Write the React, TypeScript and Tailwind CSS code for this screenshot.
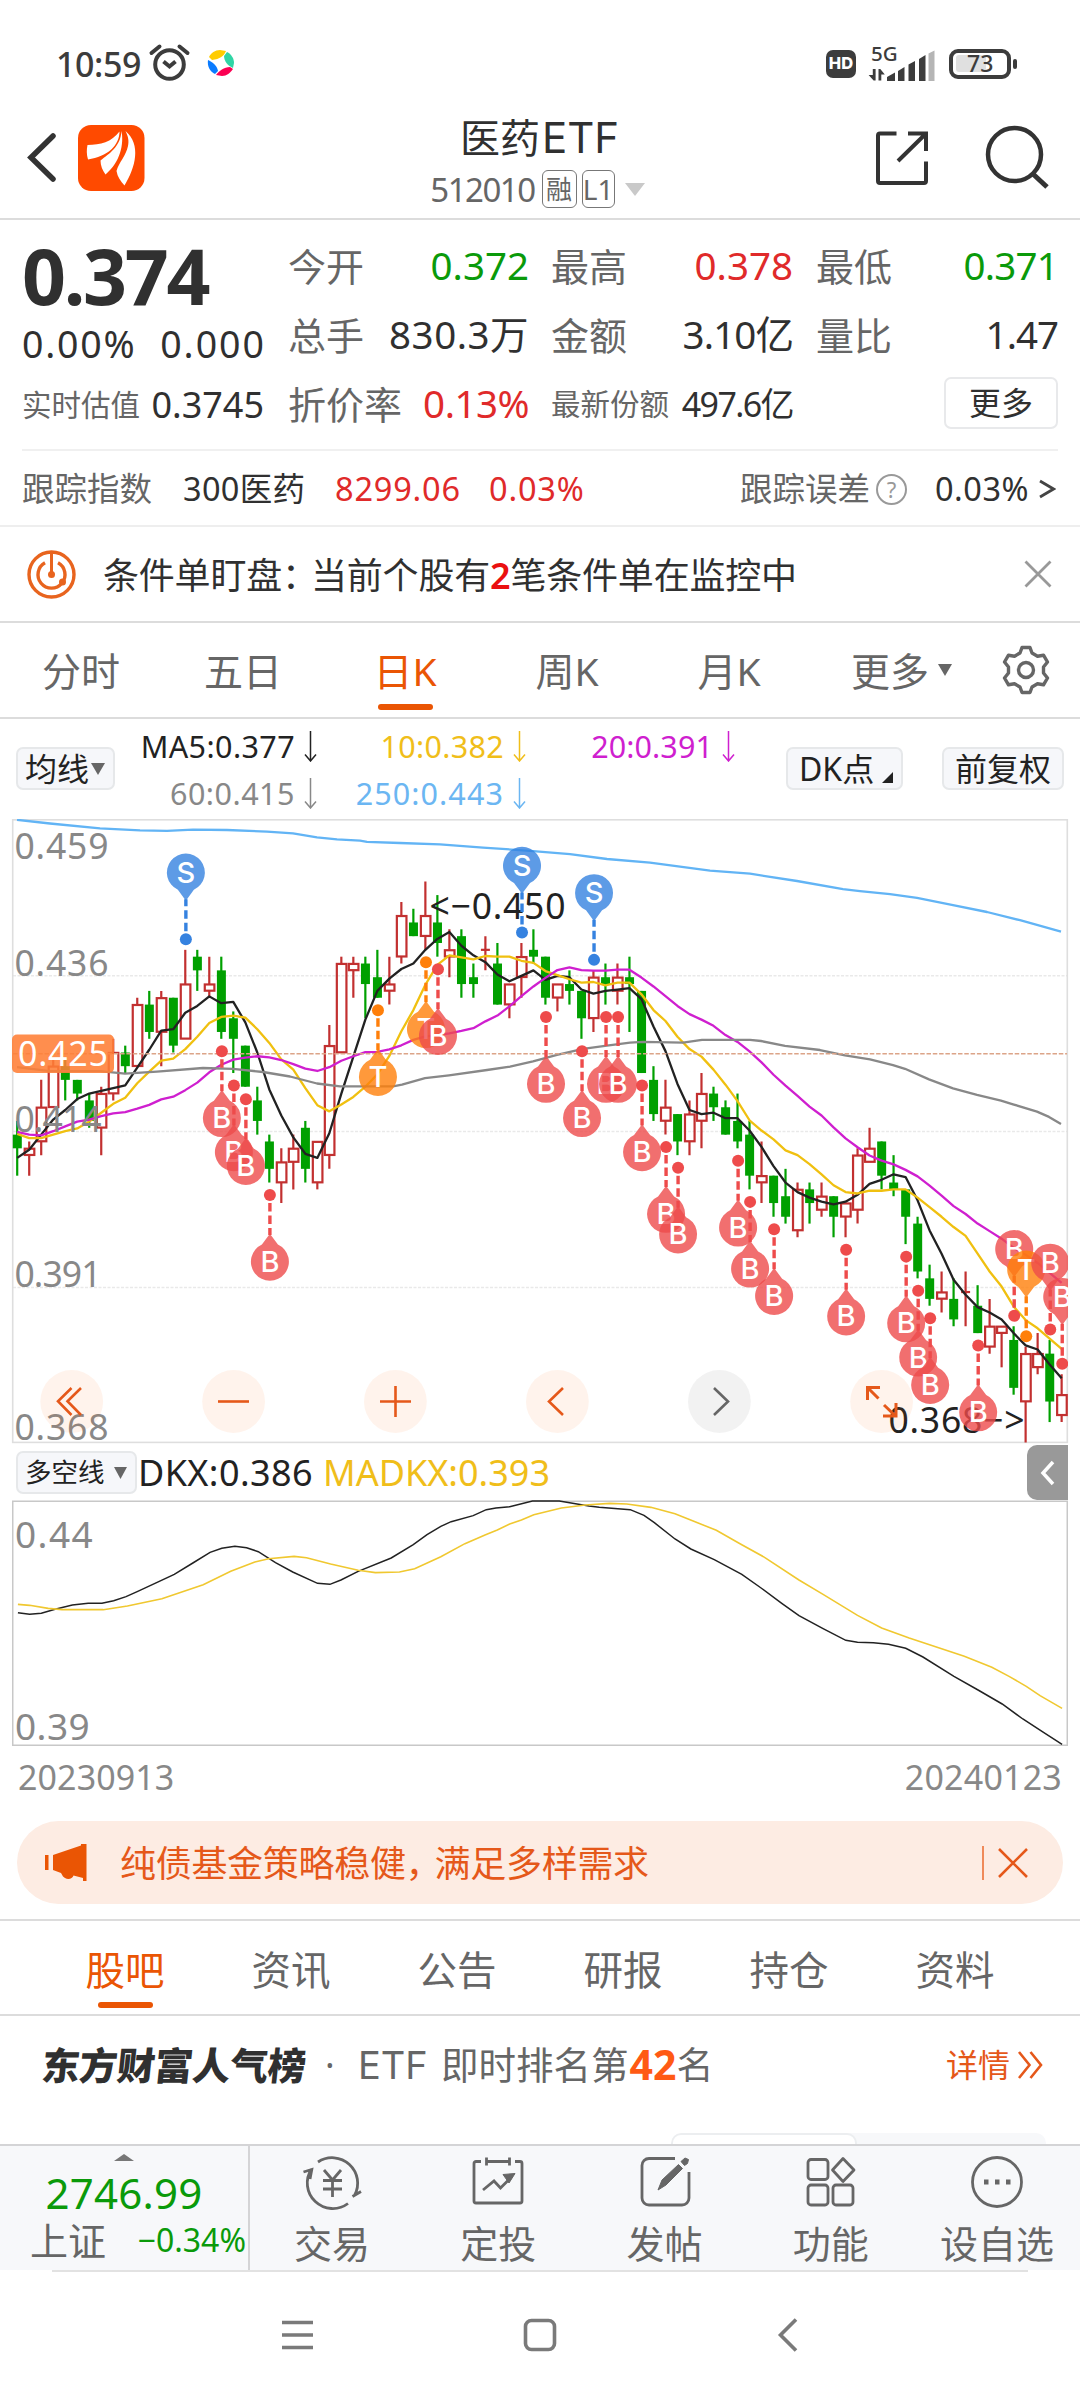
import React from 'react';

// [open, high, low, close] in thousandths
const candles = [
  [413, 415, 407, 411], [410, 412, 407, 411], [412, 421, 410, 417], [417, 424, 417, 423],
  [423, 424, 418, 421], [421, 421, 418, 419], [418, 419, 414, 415], [414, 420, 410, 419],
  [419, 427, 418, 425], [425, 426, 422, 423], [423, 433, 423, 432], [432, 434, 427, 428],
  [428, 434, 423, 433], [433, 433, 425, 426], [427, 440, 427, 435], [439, 440, 434, 437],
  [434, 439, 433, 435], [437, 439, 427, 428], [430, 431, 422, 427], [426, 426, 420, 420],
  [418, 420, 413, 415], [412, 413, 406, 408], [406, 411, 403, 409], [409, 413, 405, 411],
  [414, 415, 406, 408], [406, 412, 405, 412], [410, 429, 408, 426], [425, 439, 425, 438],
  [437, 439, 433, 438], [438, 439, 430, 435], [436, 440, 433, 433], [434, 439, 432, 435],
  [439, 447, 438, 445], [444, 446, 442, 442], [442, 450, 440, 445], [444, 448, 439, 441],
  [439, 443, 436, 440], [442, 443, 433, 435], [436, 438, 433, 435], [440, 442, 437, 440],
  [438, 441, 432, 432], [432, 435, 430, 435], [436, 441, 433, 439], [440, 443, 438, 439],
  [439, 439, 432, 433], [433, 435, 431, 435], [435, 437, 432, 434], [434, 434, 427, 430],
  [430, 437, 428, 436], [436, 438, 432, 435], [434, 438, 432, 436], [436, 439, 428, 435],
  [434, 434, 422, 422], [421, 423, 415, 416], [415, 421, 413, 417], [416, 416, 410, 412],
  [412, 418, 410, 416], [415, 422, 411, 419], [419, 420, 415, 417], [417, 418, 413, 413],
  [415, 419, 411, 412], [413, 415, 405, 407], [406, 412, 403, 407], [407, 407, 401, 403],
  [404, 408, 400, 401], [399, 406, 398, 405], [405, 406, 400, 403], [402, 406, 401, 404],
  [404, 404, 398, 401], [401, 403, 398, 403], [402, 411, 400, 410], [409, 414, 409, 411],
  [412, 412, 405, 407], [406, 410, 404, 405], [405, 405, 397, 401], [400, 401, 392, 393],
  [392, 394, 388, 389], [389, 393, 387, 390], [389, 392, 385, 386], [390, 393, 385, 390],
  [388, 391, 384, 384], [382, 389, 381, 385], [384, 385, 379, 385], [383, 385, 375, 376],
  [374, 382, 368, 381], [379, 384, 378, 381], [381, 383, 371, 374], [372, 378, 371, 375],
];

// closes before the first visible candle, needed by the moving averages
const history = [419, 419, 411, 407, 405, 409, 409, 417, 419, 422, 417, 417, 418, 416, 415, 405, 406, 412, 414];

const ma60 =
  '17,1067.1 50,1071.2 100,1071.2 125,1073.7 157,1071.6 203,1068 233,1068.8 263,1072 290,1076.5 317,1083.5 340,1086.3 393,1086.3 402,1084.7 425,1078.2 449,1075.3 487,1070 510,1066.7 533,1061.4 557,1054.9 583,1048.8 605,1045.9 630,1042.7 643,1041.8 683,1042.7 702,1039.8 750,1039.8 761,1041 785,1045.9 820,1050 845,1055.3 870,1059.4 893,1065.1 905,1068.8 929,1079.4 953,1088.4 977,1094.9 1001,1100.6 1013,1104.3 1037,1111.6 1049,1116.9 1061,1123.9';
const ma250 =
  '17,819.8 50,823.5 100,828.4 140,830.4 167,830.8 193,829.6 227,830 267,831.6 293,833.3 317,837.3 337,839.4 360,840.6 367,841.8 400,843 440,844.3 483,847.6 530,850.8 570,854.1 607,859 650,862.7 710,870.6 750,873.7 797,881 843,889.2 860,891.2 890,894.1 917,897.8 953,905.1 987,912 1020,920.2 1061,931.6';

const dkx =
  '26,549 43,554 60,551 80,539 105,526 128,521 148,521 165,513 183,501 200,485 225,461 253,434 280,400 305,368 322,356 341,350 358,354 375,366 400,399 425,427 461,461 479,464 495,451 520,425 568,385 600,345 620,315 640,290 655,276 687,258 706,240 720,235 740,231 773,214 812,214 855,229 870,233 915,240 935,257 950,279 980,328 1003,358 1037,390 1077,434 1105,475 1135,521 1160,558 1195,597 1228,632 1245,638 1268,639 1290,644 1315,656 1340,682 1385,740 1420,781 1455,823 1485,868 1515,908 1542,944';
const madkx =
  '26,524 43,527 70,536 90,540 150,540 185,529 235,507 295,465 335,425 370,397 390,387 427,380 445,384 480,403 520,422 545,429 580,427 602,417 640,381 675,342 705,315 722,301 740,283 757,271 775,255 815,235 850,226 885,221 910,223 945,233 980,252 1010,277 1040,302 1075,343 1110,383 1160,451 1195,494 1245,557 1280,595 1320,625 1400,680 1440,713 1465,740 1490,770 1510,798 1542,836';

const markers: { i: number; type: 'B' | 'S' | 'T'; above?: boolean }[] = [
  { i: 14, type: 'S', above: true },
  { i: 17, type: 'B' }, { i: 18, type: 'B' }, { i: 19, type: 'B' }, { i: 21, type: 'B' },
  { i: 30, type: 'T' }, { i: 34, type: 'T' }, { i: 35, type: 'B' },
  { i: 42, type: 'S', above: true },
  { i: 44, type: 'B' }, { i: 47, type: 'B' },
  { i: 48, type: 'S', above: true },
  { i: 49, type: 'B' }, { i: 50, type: 'B' }, { i: 52, type: 'B' }, { i: 54, type: 'B' }, { i: 55, type: 'B' },
  { i: 60, type: 'B' }, { i: 61, type: 'B' }, { i: 63, type: 'B' }, { i: 69, type: 'B' },
  { i: 74, type: 'B' }, { i: 75, type: 'B' }, { i: 76, type: 'B' }, { i: 80, type: 'B' },
  { i: 83, type: 'B', above: true }, { i: 84, type: 'T', above: true },
  { i: 86, type: 'B', above: true }, { i: 87, type: 'B', above: true },
];

const markerColors = { B: '#ee4b4b', S: '#3582e0', T: '#ff7f0a' };

const px = (i: number) => 17.2 + i * 12.005;
const py = (v: number) => 819.8 + (459 - v) * 6.844;

const closes = history.concat(candles.map(c => c[3]));
const maLine = (n: number) =>
  candles
    .map((_, i) => {
      const end = i + history.length + 1;
      const sum = closes.slice(end - n, end).reduce((a, b) => a + b, 0);
      return `${px(i)},${py(sum / n)}`;
    })
    .join(' ');

function Marker({ i, type, above }: { i: number; type: 'B' | 'S' | 'T'; above?: boolean }) {
  const x = px(i) + 0.6;
  const dir = above ? -1 : 1;
  const dot = above ? py(candles[i][1]) - 10.5 : py(candles[i][2]) + 12.5;
  const cy = dot + dir * 66.7;
  const color = markerColors[type];
  return (
    <g>
      <line x1={x} x2={x} y1={dot} y2={dot + dir * 40} stroke={color} strokeWidth="3.4" strokeDasharray="8.5 4" strokeDashoffset="-8" />
      <circle cx={x} cy={dot} r="6" fill={color} />
      <path
        d={`M${x} ${cy - dir * 28} L${x + 8} ${cy - dir * 17.2} A19 19 0 1 ${above ? 0 : 1} ${x - 8} ${cy - dir * 17.2} Z`}
        fill={color}
        fillOpacity="0.8"
      />
      <text x={x} y={cy + 10} fill="#fff" fontSize="29" fontWeight="500" textAnchor="middle" fontFamily="Inter">{type}</text>
    </g>
  );
}

function KLineChart() {
  return (
    <svg className="block" width="1080" height="635" viewBox="0 810 1080 635" fontFamily="Noto Sans">
      <defs>
        <clipPath id="plot">
          <rect x="12" y="819" width="1056" height="624" />
        </clipPath>
      </defs>
      {[975.7, 1131.6, 1287.6].map(y => (
        <line key={y} x1="13" x2="1067" y1={y} y2={y} stroke="#e9e9e9" strokeWidth="1.5" strokeDasharray="3 1.5" />
      ))}
      <rect x="12.7" y="819.8" width="1054.6" height="622.6" fill="none" stroke="#dedede" strokeWidth="1.6" />
      <g clipPath="url(#plot)">
        {candles.map(([o, h, l, c], i) => {
          const x = px(i);
          if (o > c) {
            return (
              <g key={i} fill="#00a000">
                <rect x={x - 1.1} y={py(h)} width="2.2" height={py(l) - py(h)} />
                <rect x={x - 4.4} y={py(o)} width="9" height={py(c) - py(o)} />
              </g>
            );
          }
          return (
            <g key={i} fill="none" stroke="#c23030" strokeWidth="2.2">
              <path d={`M${x} ${py(h)}V${py(c)}M${x} ${py(o)}V${py(l)}`} />
              {o === c ? (
                <path d={`M${x - 4.5} ${py(c)}h9`} />
              ) : (
                <rect x={x - 4.5} y={py(c) + 0.4} width="9.6" height={py(o) - py(c) - 0.6} />
              )}
            </g>
          );
        })}
        <g fill="none" strokeWidth="2.3" strokeLinejoin="round">
          <polyline points={maLine(5)} stroke="#222" />
          <polyline points={maLine(10)} stroke="#f0c010" />
          <polyline points={maLine(20)} stroke="#cf1fcf" />
          <polyline points={ma60} stroke="#888" />
          <polyline points={ma250} stroke="#62b4f5" />
        </g>
        <line x1="13" x2="1067" y1="1053.7" y2="1053.7" stroke="#dca488" strokeWidth="1.6" strokeDasharray="4.5 1.8" />
        <g fontSize="35.5" fill="#888">
          <text x="14.5" y="859.2" textLength="94">0.459</text>
          <text x="14.5" y="976.2" textLength="94">0.436</text>
          <text x="14.5" y="1132" textLength="87">0.414</text>
          <text x="14.5" y="1287.4" textLength="87">0.391</text>
          <text x="14.5" y="1439.6" textLength="94">0.368</text>
        </g>
        <rect x="12" y="1034.5" width="102" height="38.5" rx="5" fill="#ff7e36" fillOpacity="0.88" />
        <text x="18" y="1066" fontSize="34" fill="#fff" textLength="90">0.425</text>
        <g fontSize="35.5" fill="#222">
          <text x="429.5" y="919.4" textLength="136">&lt;−0.450</text>
          <text x="888.5" y="1433.2" textLength="136">0.368−&gt;</text>
        </g>
        {markers.map(m => (
          <Marker key={m.i} {...m} />
        ))}
        {[71.7, 233.6, 395.4, 557.4, 719.4, 881.6].map((x, i) => (
          <circle key={x} cx={x} cy="1401.5" r="31.4" fill={i === 4 ? '#555' : '#ff6010'} fillOpacity="0.08" />
        ))}
        <g fill="none" stroke="#e5581a" strokeWidth="2.6">
          <path d="M71.5 1388L58 1401.2L71.5 1415M81 1388L67.5 1401.2L81 1415" />
          <path d="M218 1401.5h31" />
          <path d="M380 1401.5h31M395.5 1386v31" />
          <path d="M563 1388L549 1401.5L563 1415" />
          <path d="M714 1388L728 1401.5L714 1415" stroke="#666" />
          <path d="M867.5 1400V1387.5H880M868 1388L878.5 1398.5M884 1405L895 1415.5M896 1403V1416H883" strokeWidth="3" />
        </g>
      </g>
    </svg>
  );
}

function StatusBar() {
  return (
    <div className="flex h-[105px] items-center pt-[22px] text-[#3c3c3c]">
      <span className="ml-[56px] w-[91px] text-[34px] leading-none font-medium tracking-[-0.4px]">10:59</span>
      <svg className="ml-[1px]" width="44" height="44" viewBox="148 42 44 44" fill="none" stroke="#3c3c3c" strokeWidth="4">
        <circle cx="169.5" cy="64.5" r="14.3" />
        <path d="M151.500 53l8-6.500M187.500 53l-8-6.500" strokeLinecap="round" />
        <path d="M163.500 61.500l6 5 6-5" />
      </svg>
      <svg className="ml-[13px]" width="32" height="32" viewBox="0 0 32 32">
        <path d="M4 9C6 5 10 2 15 2l6 1c-2 5-6 8-14 9z" fill="#ffcc00" />
        <path d="M22 4c4 2 7 6 7 11l-1 5c-5-2-9-7-9-12z" fill="#2fd5a5" />
        <path d="M28 21c-3 4-6 7-11 7l-6-1c3-4 8-8 14-8z" fill="#fb0052" />
        <path d="M3 12c4 2 9 5 10 11l-3 3c-5-2-8-8-7-14z" fill="#0a7bff" />
      </svg>
      <span className="ml-[589px] flex h-[28px] w-[30px] items-center justify-center rounded-[7px] bg-[#3c3c3c] font-[Inter] text-[16.5px] leading-none font-extrabold text-white">HD</span>
      <svg className="ml-[11px] overflow-visible" width="70" height="42" viewBox="867 41 70 42" fill="#3c3c3c">
        <text x="871" y="59" fontSize="20.500" fontFamily="Noto Sans" fontWeight="500">5G</text>
        <path d="M872.800 67h2.800v11.500h-2l-5-5.500h4.200zM878.500 78.500V67h1.800l4.500 5.500h-3.500v6z" />
        <path d="M887 75l8-4.500V79h-8zM898 69l6.500-4V79H898zM908.500 62.500l6.500-3.500v20h-6.500zM919 57l6.500-4v26H919z" />
        <path d="M928.500 51.500l6-3V79h-6z" fill="#b5b5b5" />
      </svg>
      <div className="ml-[12px] flex h-[30px] w-[62px] items-center rounded-[9px] border-4 border-[#3c3c3c]">
        <div className="ml-[3px] h-[17px] w-[30px] rounded-l-[3px] bg-[#e0e0e0]" />
        <span className="-ml-[19px] text-[23px] leading-none font-medium">73</span>
      </div>
      <div className="ml-[2px] h-[10px] w-[4px] rounded-full bg-[#3c3c3c]" />
    </div>
  );
}

function Header() {
  return (
    <div className="flex h-[115px] border-b-2 border-[#dcdcdc]">
      <svg width="160" height="110" viewBox="0 105 160 110">
        <path d="M53 136L31 157.500L53 179" fill="none" stroke="#333" strokeWidth="5.500" strokeLinecap="round" strokeLinejoin="miter" />
        <rect x="78" y="125" width="66.500" height="66" rx="13" fill="#ff4a00" />
        <path d="M87.500 145c13 0 24-3 32-13.500c0 14-12 25-31.500 28c-1.500-5-1.500-10-.5-14.500z" fill="#fff" />
        <path d="M121.500 131c2.500 13-1 31-16 43.500c-3-4-5-9-5-14c9-7 20-14 21-29.500z" fill="#fff" />
        <path d="M125.500 131c3 6 3.500 10 2.500 15c-2 10-9 16-11.500 25c1 6 4 10 8 14.500c11-18 17-41 1-54.500z" fill="#fff" />
      </svg>
      <div className="flex w-[760px] flex-col items-center">
        <div className="mt-[9px] mr-[1px] flex h-[48px] items-center text-[40px] leading-none text-[#303030]">
          医药<span className="ml-[2px] font-[Inter] text-[42px]">ETF</span>
        </div>
        <div className="mt-[3px] mr-[5px] flex h-[48px] items-center text-[33px] leading-none text-[#666]">
          <span className="mr-[7px] tracking-[-1.5px]">512010</span>
          <span className="mr-[5px] flex h-[38px] w-[35px] items-center justify-center rounded-[6px] border border-[#777] text-[26px]">融</span>
          <span className="flex h-[38px] w-[33px] items-center justify-center rounded-[6px] border border-[#777] text-[28px]">L1</span>
          <svg className="ml-[10px]" width="20" height="13" viewBox="0 0 20 13"><path d="M0 0h20L10 13z" fill="#c9c9c9" /></svg>
        </div>
      </div>
      <svg className="ml-[-60px]" width="220" height="110" viewBox="860 105 220 110" fill="none" stroke="#333" strokeWidth="4">
        <path d="M896.500 133.500H880a2 2 0 0 0-2 2V181a2 2 0 0 0 2 2H924a2 2 0 0 0 2-2V161.500M908 133.500H926V151M925 134.500L898 161" />
        <circle cx="1014.500" cy="154.500" r="26.500" strokeWidth="4.500" />
        <path d="M1033 174L1047 187" strokeWidth="5" />
      </svg>
    </div>
  );
}

function Item({ label, value, className, small }: { label: string; value: string; className: string; small?: boolean }) {
  return (
    <div className="flex h-[69px] items-center justify-between">
      <span className={small ? 'text-[29.5px] text-[#666]' : 'text-[38px] text-[#666]'}>{label}</span>
      <span className={`${small ? 'text-[34px]' : 'text-[38.5px]'} ${className}`}>{value}</span>
    </div>
  );
}

function Quote() {
  return (
    <div className="mx-[22px] flex h-[231px] border-b-2 border-[#f0f0f0] leading-none">
      <div className="w-[242px] pt-[15px] text-[#303030]">
        <div className="flex h-[80px] items-center text-[77px] font-bold tracking-[-2.3px]">0.374</div>
        <div className="flex h-[57px] items-center justify-between text-[37.5px]">
          <span className="tracking-[1.8px]">0.00%</span>
          <span className="-mr-[2px] tracking-[2px]">0.000</span>
        </div>
        <div className="flex h-[66px] items-center justify-between">
          <span className="text-[29.5px] text-[#666]">实时估值</span>
          <span className="text-[36px]">0.3745</span>
        </div>
      </div>
      <div className="ml-[24px] w-[241px] pt-[11px]">
        <Item label="今开" value="0.372" className="text-[#0a9a0a]" />
        <Item label="总手" value="830.3万" className="text-[#303030] tracking-[0.5px]" />
        <Item label="折价率" value="0.13%" className="text-[#e02a2a] tracking-[-0.5px]" />
      </div>
      <div className="ml-[22px] w-[242px] pt-[11px]">
        <Item label="最高" value="0.378" className="text-[#e02a2a]" />
        <Item label="金额" value="3.10亿" className="text-[#303030] tracking-[-0.9px]" />
        <Item label="最新份额" value="497.6亿" small className="text-[#303030] tracking-[-1.6px]" />
      </div>
      <div className="ml-[23px] w-[242px] pt-[11px]">
        <Item label="最低" value="0.371" className="text-[#0a9a0a] tracking-[-0.8px]" />
        <Item label="量比" value="1.47" className="text-[#303030] tracking-[-1px]" />
        <div className="mt-[8px] ml-auto flex h-[52px] w-[114px] items-center justify-center rounded-[7px] border-2 border-[#e8e9eb] text-[32px] text-[#303030]">更多</div>
      </div>
    </div>
  );
}

function TrackIndex() {
  return (
    <div className="flex h-[76px] items-center border-b-2 border-[#eee] pt-[2px] pl-[22px] text-[32.5px] leading-none text-[#303030]">
      <span className="w-[161px] text-[#666]">跟踪指数</span>
      <span className="w-[152px] tracking-[0.3px]">300医药</span>
      <span className="w-[154px] tracking-[0.8px] text-[#e02a2a]">8299.06</span>
      <span className="w-[251px] tracking-[0.8px] text-[#e02a2a]">0.03%</span>
      <span className="text-[#666]">跟踪误差</span>
      <span className="ml-[6px] flex h-[31px] w-[31px] items-center justify-center rounded-full border-2 border-[#999] text-[22px] text-[#999]">?</span>
      <span className="ml-[28px] tracking-[0.5px]">0.03%</span>
      <svg className="ml-[10px]" width="17" height="20" viewBox="0 0 17 20"><path d="M1 2L14.500 10L1 18" fill="none" stroke="#444" strokeWidth="2.800" /></svg>
    </div>
  );
}

function Notice() {
  return (
    <div className="flex h-[96px] items-center border-b-2 border-[#dcdcdc] leading-none">
      <svg className="ml-[27px]" width="49" height="49" viewBox="0 0 49 49" fill="none" stroke="#e8641e" strokeWidth="3.400">
        <circle cx="24.500" cy="24.500" r="22.500" />
        <path d="M18 12.800A13.500 13.500 0 1 0 31 12.800" />
        <path d="M24.500 3V24" strokeWidth="3" />
        <circle cx="24.500" cy="24.500" r="3.500" fill="#e8641e" stroke="none" />
        <circle cx="35.500" cy="32" r="3.500" fill="#e8641e" stroke="none" />
      </svg>
      <div className="mt-[3px] ml-[27px] flex text-[36px] tracking-[-0.2px] text-[#303030]">
        条件单盯盘<span className="w-[29px]">：</span>当前个股有<span className="font-semibold text-[#ea1010]">2</span>笔条件单在监控中
      </div>
      <svg className="ml-auto mr-[28px]" width="28" height="28" viewBox="0 0 28 28"><path d="M1.500 1.500L26.500 26.500M26.500 1.500L1.500 26.500" stroke="#999" strokeWidth="2.800" /></svg>
    </div>
  );
}

function PeriodTabs() {
  const tabs = ['分时', '五日', '日K', '周K', '月K'];
  return (
    <div className="flex h-[96px] border-b-2 border-[#dcdcdc] text-[39px] leading-none text-[#666]">
      {tabs.map(tab => (
        <div key={tab} className={tab === '日K' ? 'flex w-[162px] flex-col items-center text-[#ea5504]' : 'flex w-[162px] flex-col items-center'}>
          <span className="mt-[28px] h-[53px]">{tab}</span>
          {tab === '日K' && <span className="h-[6px] w-[55px] rounded-[3px] bg-[#ea5504]" />}
        </div>
      ))}
      <div className="flex w-[191px] pl-[41px]">
        <span className="mt-[28px]">更多</span>
        <svg className="mt-[41px] ml-[9px]" width="14" height="12" viewBox="0 0 14 12"><path d="M0 0h14L7 12z" fill="#666" /></svg>
      </div>
      <svg className="mt-[22px]" width="50" height="50" viewBox="0 0 50 50" fill="none" stroke="#666" strokeWidth="3.400" strokeLinejoin="round">
        <path d="M21 2.500h8l2 5.500l5.500 3.200l6-1l4 6.800l-4 5v6l4 5l-4 6.800l-6-1L31 42l-2 5.500h-8L19 42l-5.500-3.200l-6 1l-4-6.800l4-5v-6l-4-5l4-6.800l6 1L19 8z" />
        <circle cx="25" cy="25" r="7.500" />
      </svg>
    </div>
  );
}

function Down({ color }: { color: string }) {
  return (
    <svg className="ml-[9px] shrink-0" width="13" height="31" viewBox="0 0 13 31">
      <path d="M6.500 0V30M1 23.500L6.500 30L12 23.500" fill="none" stroke={color} strokeWidth="1.500" />
    </svg>
  );
}

function MaLegend() {
  return (
    <div className="flex h-[91px] text-[30.5px] leading-none">
      <div className="mt-[28px] ml-[16px] flex h-[43px] w-[99px] shrink-0 items-center rounded-[7px] border-2 border-[#e6e8ea] bg-[#f6f7fa] pl-[7px] text-[32px] text-[#222]">
        均线
        <svg className="ml-[2px]" width="14" height="12" viewBox="0 0 14 12"><path d="M0 0h14L7 12z" fill="#666" /></svg>
      </div>
      <div className="flex w-[202px] shrink-0 flex-col items-end pt-[4px]">
        <div className="flex h-[46px] shrink-0 items-center tracking-[0.4px] text-[#222]">MA5:0.377<Down color="#222" /></div>
        <div className="flex h-[49px] shrink-0 items-center tracking-[0.5px] text-[#888]">60:0.415<Down color="#888" /></div>
      </div>
      <div className="flex w-[209px] shrink-0 flex-col items-end pt-[4px]">
        <div className="flex h-[46px] shrink-0 items-center tracking-[0.3px] text-[#f0be1a]">10:0.382<Down color="#f0be1a" /></div>
        <div className="flex h-[49px] shrink-0 items-center tracking-[1.1px] text-[#6bb6f2]">250:0.443<Down color="#6bb6f2" /></div>
      </div>
      <div className="flex w-[209px] shrink-0 flex-col items-end pt-[4px]">
        <div className="flex h-[46px] shrink-0 items-center tracking-[0.1px] text-[#cf1fcf]">20:0.391<Down color="#cf1fcf" /></div>
      </div>
      <div className="mt-[28px] ml-[51px] flex h-[43px] w-[117px] shrink-0 items-center rounded-[7px] border-2 border-[#e6e8ea] bg-[#f6f7fa] pl-[11px] text-[32px] text-[#222]">
        DK点
        <svg className="mt-[18px] ml-[8px] shrink-0" width="11" height="11" viewBox="0 0 11 11"><path d="M11 0V11H0z" fill="#222" /></svg>
      </div>
      <div className="mt-[28px] ml-[39px] flex h-[43px] w-[122px] shrink-0 items-center justify-center rounded-[7px] border-2 border-[#e6e8ea] bg-[#f6f7fa] text-[32px] text-[#222]">前复权</div>
    </div>
  );
}

function DkxPanel() {
  return (
    <div>
      <div className="flex h-[55px] items-center leading-none">
        <div className="ml-[16px] flex h-[43px] w-[121px] items-center rounded-[7px] border-2 border-[#e6e8ea] bg-[#f6f7fa] pl-[7px] text-[26.5px] text-[#222]">
          多空线
          <svg className="ml-[9px]" width="13" height="12" viewBox="0 0 13 12"><path d="M0 0h13L6.500 12z" fill="#666" /></svg>
        </div>
        <span className="ml-[1px] w-[185px] text-[36px] tracking-[0.4px] text-[#222]">DKX:0.386</span>
        <span className="text-[36px] text-[#f0be1a]">MADKX:0.393</span>
        <div className="mr-[12px] ml-auto flex h-[55px] w-[41px] items-center justify-center rounded-l-[10px] bg-[#999]">
          <svg width="15" height="26" viewBox="0 0 15 26"><path d="M13 2L3 13L13 24" fill="none" stroke="#fff" strokeWidth="3.500" /></svg>
        </div>
      </div>
      <div className="relative h-[246px]">
        <svg className="block" width="1080" height="246" viewBox="0 211 1568 738" preserveAspectRatio="none" fill="none">
          <rect x="18.500" y="214.500" width="1531" height="732" stroke="#c8c8c8" strokeWidth="1.500" vectorEffect="non-scaling-stroke" />
          <polyline points={dkx} stroke="#222" strokeWidth="1.500" vectorEffect="non-scaling-stroke" />
          <polyline points={madkx} stroke="#f0c830" strokeWidth="1.600" vectorEffect="non-scaling-stroke" />
        </svg>
        <span className="absolute top-[15px] left-[15px] text-[37px] leading-none tracking-[1.4px] text-[#888]">0.44</span>
        <span className="absolute top-[207px] left-[15px] text-[37px] leading-none tracking-[0.4px] text-[#888]">0.39</span>
      </div>
      <div className="flex h-[61px] items-center justify-between pr-[18px] pl-[18px] text-[34px] leading-none text-[#888]">
        <span className="tracking-[0.1px]">20230913</span>
        <span className="tracking-[0.2px]">20240123</span>
      </div>
    </div>
  );
}

function Banner() {
  return (
    <div className="mx-[17px] mt-[14px] flex h-[83px] items-center rounded-full bg-[#fdece3] leading-none text-[#e5581a]">
      <svg className="ml-[28px]" width="42" height="38" viewBox="0 0 42 38" fill="#ea5504">
        <path d="M0 11h3.500v15H0zM8 11L36 1.500V0h5.500v37H38v-3l-9.500-2.500c-1 3-5 4.500-8.500 2.500l-2-1.500-2-3.500L8 26z" />
      </svg>
      <div className="mt-[2px] ml-[33px] flex text-[36px] tracking-[-0.3px]">纯债基金策略稳健<span className="w-[29px]">，</span>满足多样需求</div>
      <div className="ml-auto h-[34px] w-[2px] bg-[#ef8a5a]" />
      <svg className="mr-[35px] ml-[14px]" width="30" height="30" viewBox="0 0 30 30"><path d="M1 1L29 29M29 1L1 29" stroke="#e5581a" strokeWidth="2.600" /></svg>
    </div>
  );
}

function InfoTabs() {
  const tabs = ['股吧', '资讯', '公告', '研报', '持仓', '资料'];
  return (
    <div className="mt-[15px] flex h-[97px] border-y-2 border-[#dcdcdc] px-[42px] text-[39.5px] leading-none text-[#666]">
      {tabs.map((tab, i) => (
        <div key={tab} className={i === 0 ? 'flex flex-1 flex-col items-center text-[#ea5504]' : 'flex flex-1 flex-col items-center'}>
          <span className="mt-[30px] h-[51px]">{tab}</span>
          {i === 0 && <span className="h-[6px] w-[55px] rounded-[3px] bg-[#ea5504]" />}
        </div>
      ))}
    </div>
  );
}

function Ranking() {
  return (
    <div className="h-[128px]">
      <div className="flex h-[97px] items-center leading-none text-[#666]">
        <span className="ml-[42px] w-[283px] -skew-x-6 text-[38px] font-black tracking-[-0.3px] text-[#303030]">东方财富人气榜</span>
        <span className="w-[33px] text-[36px]">·</span>
        <span className="w-[83px] font-[Inter] text-[38px]">ETF</span>
        <span className="text-[37.5px]">即时排名第</span>
        <span className="ml-[1px] text-[41px] font-bold text-[#ff5a14]">42</span>
        <span className="text-[37px]">名</span>
        <span className="ml-auto text-[32px] text-[#e5581a]">详情</span>
        <svg className="mr-[36px] ml-[7px]" width="27" height="28" viewBox="0 0 27 28"><path d="M2 1L12.500 14L2 27M13.500 1L24 14L13.500 27" fill="none" stroke="#e5581a" strokeWidth="2.600" /></svg>
      </div>
      <div className="mt-[20px] ml-[671px] h-[11px] w-[375px] overflow-hidden rounded-t-[10px] bg-[#f7f8fa]">
        <div className="h-[30px] w-[186px] rounded-[10px] border-2 border-[#eceef0] bg-white" />
      </div>
    </div>
  );
}

function BottomBar() {
  const actions = [
    {
      label: '交易',
      icon: (
        <>
          <path d="M16 10A25.500 25.500 0 0 1 52.500 43.500M46 51.500A25.500 25.500 0 0 1 9.500 17M1.500 20L9.800 17.500L8 27M50.500 44.500L59 39.500" />
          <path d="M22 18l8.500 10L39 18M21 28.500h19M21 37h19M30.500 28v17" />
        </>
      ),
    },
    {
      label: '定投',
      icon: (
        <>
          <path d="M13 9.500H8a2 2 0 0 0-2 2V49a2 2 0 0 0 2 2H52a2 2 0 0 0 2-2V11.500a2 2 0 0 0-2-2H47M18.500 5.500v8M41.500 5.500v8M18.500 9.500h23" />
          <path d="M15 38L26 29L32.500 36L43 25.500" />
          <path d="M35 22.500l12-1-6 9.500z" fill="#666" strokeWidth="1" />
        </>
      ),
    },
    {
      label: '发帖',
      icon: (
        <>
          <path d="M40 6.500H14a7 7 0 0 0-7 7V46a7 7 0 0 0 7 7H47a7 7 0 0 0 7-7V20" />
          <path d="M23 38l4-10L43.500 12.500l4 4L31 33zM46 9.500l4-3.500l3.500 1.500l-1 4l-3 2z" fill="#666" strokeWidth="1" />
        </>
      ),
    },
    {
      label: '功能',
      icon: (
        <>
          <rect x="7" y="7.500" width="20" height="20" rx="3" />
          <rect x="7" y="33" width="20" height="20" rx="3" />
          <rect x="32" y="33" width="20" height="20" rx="3" />
          <path d="M42 6.500L53 18L42 29.500L31.500 18z" strokeLinejoin="round" />
        </>
      ),
    },
    {
      label: '设自选',
      icon: (
        <>
          <circle cx="30" cy="30" r="24.500" />
          <path d="M17 30h4.500M28 30h4.500M39 30h4.500" strokeWidth="5" />
        </>
      ),
    },
  ];
  return (
    <div className="flex h-[126px] border-t-2 border-[#d4d4d6] bg-[#f7f8fa] leading-none">
      <div className="w-[250px] shrink-0 border-r-2 border-[#d4d4d6]">
        <svg className="mt-[8px] ml-[114px]" width="20" height="7" viewBox="0 0 20 7"><path d="M10 0L20 7H0z" fill="#777" /></svg>
        <div className="mt-[11px] text-center text-[42px] tracking-[0.2px] text-[#0a9a0a]">2746.99</div>
        <div className="mt-[7px] flex items-center">
          <span className="ml-[30px] text-[38px] text-[#666]">上证</span>
          <span className="mr-[2px] ml-auto text-[32px] text-[#0a9a0a]">−0.34%</span>
        </div>
      </div>
      <div className="-ml-[1px] flex w-[831px] shrink-0">
        {actions.map(a => (
          <div key={a.label} className="flex flex-1 flex-col items-center text-[38px] text-[#666]">
            <svg className="mt-[6px] mb-[12px]" width="60" height="60" viewBox="0 0 60 60" fill="none" stroke="#666" strokeWidth="2.800">{a.icon}</svg>
            {a.label}
          </div>
        ))}
      </div>
    </div>
  );
}

function SystemNav() {
  return (
    <div className="mx-[52px] h-[130px] border-t-2 border-[#e2e2e2]">
      <svg className="mx-auto mt-[45px] block" width="520" height="36" viewBox="280 2317 520 36" fill="none" stroke="#7a7a7a" strokeWidth="3.600">
        <path d="M282 2322.500h31M282 2335h31M282 2347.500h31" />
        <rect x="525.500" y="2320.500" width="29" height="29" rx="6" />
        <path d="M796 2319.500L780.500 2335L796 2350.500" />
      </svg>
    </div>
  );
}

export default function App() {
  return (
    <div className="h-[2400px] w-[1080px] overflow-hidden bg-white font-['Noto_Sans','Noto_Sans_CJK_SC',sans-serif]">
      <StatusBar />
      <Header />
      <Quote />
      <TrackIndex />
      <Notice />
      <PeriodTabs />
      <MaLegend />
      <KLineChart />
      <DkxPanel />
      <Banner />
      <InfoTabs />
      <Ranking />
      <BottomBar />
      <SystemNav />
    </div>
  );
}
